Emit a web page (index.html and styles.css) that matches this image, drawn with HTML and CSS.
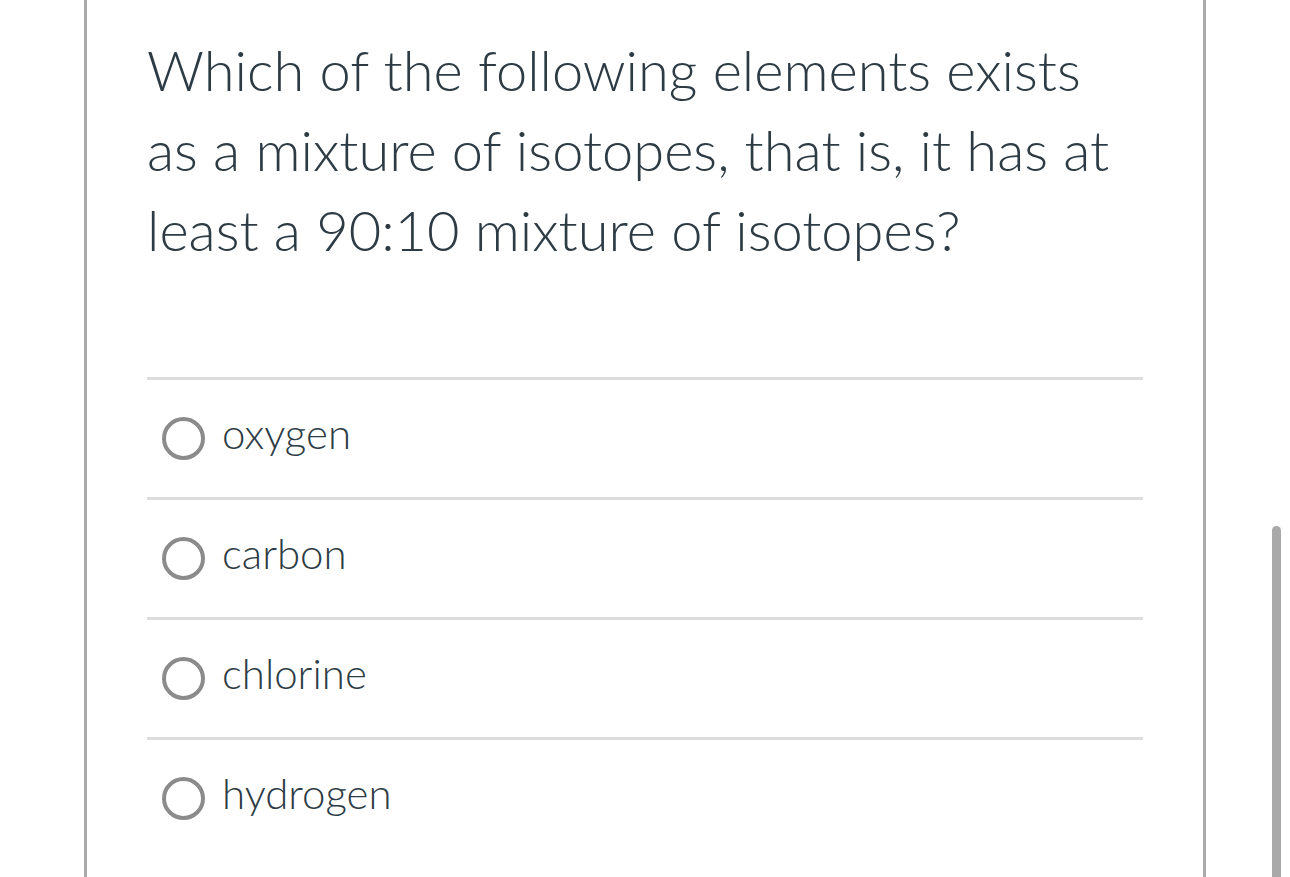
FILE: index.html
```html
<!DOCTYPE html>
<html lang="en">
<head>
<meta charset="utf-8">
<title>Quiz question</title>
<link rel="stylesheet" href="styles.css">
</head>
<body>
<div class="page">
  <div class="card">
    <div class="question">Which of the following elements exists as a mixture of isotopes, that is, it has at least a 90:10 mixture of isotopes?</div>
    <div class="answers">
      <label class="answer"><span class="radio"></span><span class="answer-text">oxygen</span></label>
      <label class="answer"><span class="radio"></span><span class="answer-text">carbon</span></label>
      <label class="answer"><span class="radio"></span><span class="answer-text">chlorine</span></label>
      <label class="answer"><span class="radio"></span><span class="answer-text">hydrogen</span></label>
    </div>
  </div>
</div>
<div class="scroll-thumb"></div>
</body>
</html>
```
FILE: styles.css
```css
html, body {
  margin: 0;
  padding: 0;
  height: 100%;
  overflow: hidden;
  background: #ffffff;
}
body {
  font-family: Lato, "Liberation Sans", sans-serif;
  color: #2d3b45;
}
.page {
  padding-left: 84px;
  width: 1122px;
}
.card {
  border-left: 3px solid #aaaaaa;
  border-right: 3px solid #aaaaaa;
  padding: 30px 60px 0 60px;
  min-height: 877px;
  box-sizing: border-box;
}
.question {
  font-size: 56px;
  font-weight: 300;
  line-height: 80px;
  padding-bottom: 107px;
}
.answers {
  display: flex;
  flex-direction: column;
}
.answer {
  display: flex;
  align-items: center;
  height: 117px;
  border-top: 3px solid #dddddd;
  padding-left: 15px;
}
.radio {
  width: 35px;
  height: 35px;
  border: 4px solid #8b8b8b;
  border-radius: 50%;
  flex: none;
}
.answer-text {
  margin-left: 17px;
  font-size: 42px;
  font-weight: 300;
  line-height: 50px;
  padding-bottom: 12px;
}
.scroll-thumb {
  position: fixed;
  left: 1272px;
  top: 526px;
  width: 9px;
  bottom: 0;
  background: #a9a9a9;
  border-radius: 5px 5px 0 0;
}
```
